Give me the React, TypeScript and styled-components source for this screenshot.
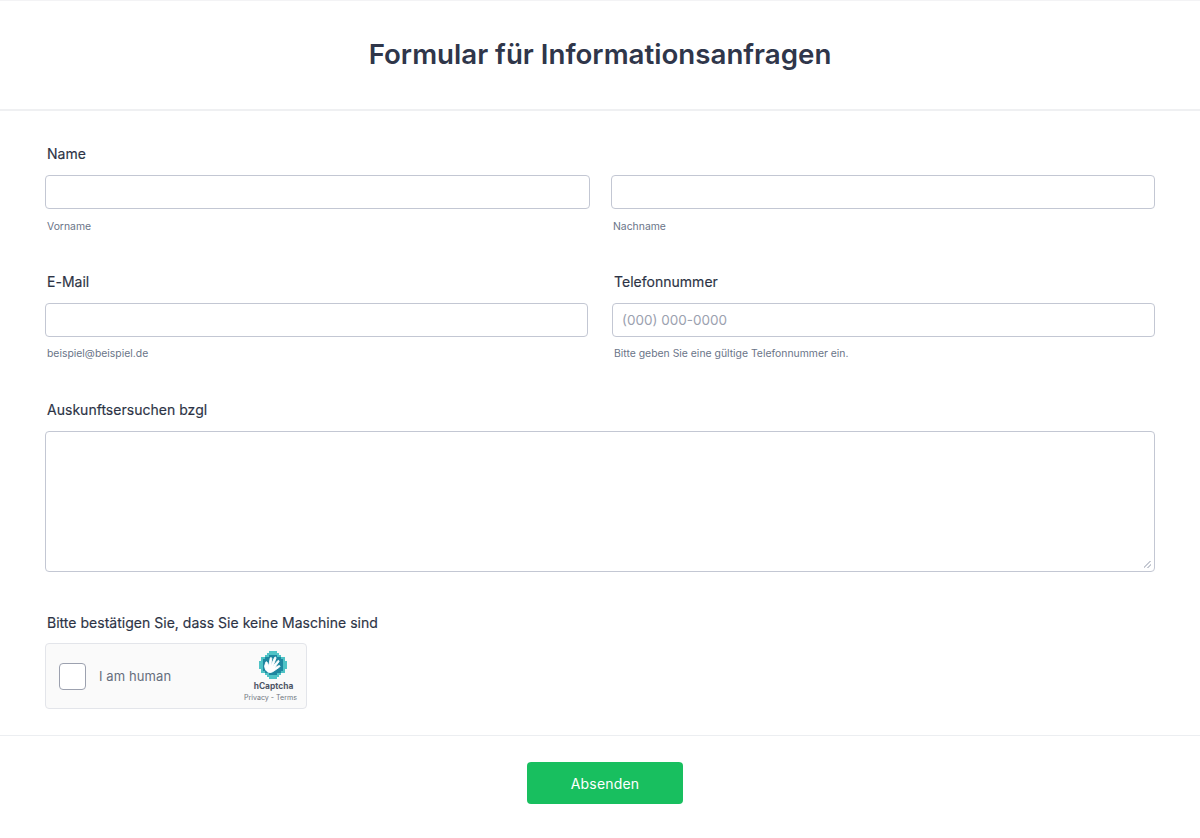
import styled, { createGlobalStyle } from 'styled-components';

const GlobalStyle = createGlobalStyle`
  html, body {
    margin: 0;
    padding: 0;
    background: #fff;
    font-family: Inter, "Liberation Sans", sans-serif;
    color: #2c3345;
  }
  * { box-sizing: border-box; }
`;

const Page = styled.div`
  width: 1200px;
  height: 838px;
  display: flex;
  flex-direction: column;
  overflow: hidden;
`;

const Header = styled.header`
  height: 111px;
  padding-top: 36px;
  border-top: 1px solid #f3f3f5;
  border-bottom: 2px solid #eff0f2;
  text-align: center;
`;

const Title = styled.h1`
  margin: 0;
  font-size: 27.7px;
  line-height: 35px;
  font-weight: 600;
  color: #2f364a;
`;

const Form = styled.form`
  height: 625px;
  padding: 33px 45px 0;
  display: flex;
  flex-direction: column;
  border-bottom: 1px solid #eceef1;
`;

const Row = styled.div<{ $columns: string; $gap: number }>`
  display: grid;
  grid-template-columns: ${({ $columns }) => $columns};
  column-gap: ${({ $gap }) => $gap}px;
  height: 128px;
`;

const Label = styled.label`
  display: block;
  height: 20px;
  padding-left: 2px;
  font-size: 14px;
  line-height: 20px;
  font-weight: 400;
  letter-spacing: 0.02px;
  color: #2c3345;
  -webkit-text-stroke: 0.15px #2c3345;
`;

const LabelSpacer = styled.div`
  height: 20px;
`;

const Input = styled.input`
  display: block;
  width: 100%;
  height: 34px;
  margin-top: 11px;
  padding: 0 9px;
  background: #fff;
  border: 1px solid #c3c7d3;
  border-radius: 4px;
  font-family: inherit;
  font-size: 13.5px;
  color: #2c3345;
  outline: none;
  &::placeholder {
    color: #9ba1af;
    opacity: 1;
  }
`;

const Hint = styled.div<{ $drop?: number }>`
  margin-top: ${({ $drop }) => 10 + ($drop ?? 0)}px;
  padding-left: 2px;
  font-size: 10.4px;
  line-height: 14px;
  color: #6a7488;
`;

const MessageField = styled.div`
  height: 212px;
`;

const Message = styled.textarea`
  display: block;
  width: 100%;
  height: 141px;
  margin-top: 11px;
  background: #fff;
  border: 1px solid #c3c7d3;
  border-radius: 4px;
  outline: none;
  resize: vertical;
  &::-webkit-resizer {
    background: linear-gradient(
        135deg,
        transparent 0 42%,
        #c6cad3 42% 54%,
        transparent 54% 68%,
        #c6cad3 68% 80%,
        transparent 80%
      )
      right 3px bottom 3px / 7px 7px no-repeat;
  }
`;

const CaptchaField = styled.div`
  padding-top: 1px;
`;

const Captcha = styled.div`
  width: 262px;
  height: 66px;
  margin-top: 10px;
  padding: 0 9px 0 13px;
  display: flex;
  align-items: center;
  background: #fafafa;
  border: 1px solid #e3e5ea;
  border-radius: 4px;
`;

const CaptchaBox = styled.div`
  width: 27px;
  height: 27px;
  background: #fff;
  border: 1px solid #9ca1af;
  border-radius: 4px;
`;

const CaptchaText = styled.span`
  margin-left: 13px;
  flex: 1;
  font-size: 13px;
  letter-spacing: 0.1px;
  color: #666e7d;
`;

const CaptchaBrand = styled.div`
  display: flex;
  flex-direction: column;
  align-items: center;
  padding-top: 1px;
`;

const LogoSlot = styled.div`
  height: 29px;
  margin-left: 5px;
`;

const BrandName = styled.div`
  margin-left: 6px;
  font-size: 8.4px;
  line-height: 12px;
  font-weight: 700;
  color: #4e5666;
`;

const BrandLinks = styled.div`
  margin-top: 1px;
  font-size: 7.1px;
  line-height: 10px;
  color: #70767f;
  white-space: nowrap;
`;

const Footer = styled.footer`
  display: flex;
  justify-content: center;
  padding-top: 26px;
  padding-left: 10px;
`;

const Submit = styled.button`
  width: 156px;
  height: 42px;
  border: none;
  border-radius: 4px;
  background: #18bf5f;
  color: #fff;
  font-family: inherit;
  font-size: 14px;
  font-weight: 400;
  letter-spacing: 0.2px;
`;

const diamond = [
  [10, 0, 8], [8, 2, 12], [6, 4, 16], [2, 6, 24], [2, 8, 24], [0, 10, 28],
  [0, 12, 28], [0, 14, 28], [0, 16, 28], [2, 18, 24], [2, 20, 24], [6, 22, 16], [8, 24, 12], [10, 26, 8],
];

const center = [
  [10, 4, 8], [6, 6, 16], [4, 8, 20], [4, 10, 20], [4, 12, 20], [4, 14, 20], [4, 16, 20], [4, 18, 20], [6, 20, 16], [10, 22, 8],
];

function HCaptchaLogo() {
  return (
    <svg width="28" height="28" viewBox="0 0 28 28" aria-hidden="true">
      {diamond.map(([x, y, w]) => (
        <rect key={y} x={x} y={y} width={w} height="2" fill="#4fc3c6" />
      ))}
      {center.map(([x, y, w]) => (
        <rect key={y} x={x} y={y} width={w} height="2" fill="#1f87a0" />
      ))}
      <path
        transform="rotate(28 14 14) translate(1.500 1.500) scale(0.9)"
        d="M5.500 15.600c-.8-.9.300-2.100 1.300-1.300l2.700 2.200.4-.5-2.300-7.200c-.4-1.100 1.200-1.700 1.700-.6l2.300 5.900.5-.1-.6-8.200c-.1-1.200 1.600-1.300 1.800-.1l1 8.100.5.100 1.500-6.700c.3-1.100 1.900-.8 1.700.4l-1.100 7.400.4.200 2.600-3.700c.7-1 2.100-.1 1.500 1l-3.900 7.600c-1.400 2.600-3.700 3.900-6.300 3.200-2.200-.6-3.700-2.200-5-3.900z"
        fill="#fff"
        stroke="#fff"
        strokeWidth="0.9"
        strokeLinejoin="round"
      />
    </svg>
  );
}

export default function App() {
  return (
    <Page>
      <GlobalStyle />
      <Header>
        <Title>Formular für Informationsanfragen</Title>
      </Header>
      <Form onSubmit={(e) => e.preventDefault()}>
        <Row $columns="545px 544px" $gap={21}>
          <div>
            <Label>Name</Label>
            <Input />
            <Hint $drop={1}>Vorname</Hint>
          </div>
          <div>
            <LabelSpacer />
            <Input />
            <Hint $drop={1}>Nachname</Hint>
          </div>
        </Row>
        <Row $columns="543px 543px" $gap={24}>
          <div>
            <Label>E-Mail</Label>
            <Input />
            <Hint>beispiel@beispiel.de</Hint>
          </div>
          <div>
            <Label>Telefonnummer</Label>
            <Input placeholder="(000) 000-0000" />
            <Hint>Bitte geben Sie eine gültige Telefonnummer ein.</Hint>
          </div>
        </Row>
        <MessageField>
          <Label>Auskunftsersuchen bzgl</Label>
          <Message />
        </MessageField>
        <CaptchaField>
          <Label>Bitte bestätigen Sie, dass Sie keine Maschine sind</Label>
          <Captcha>
            <CaptchaBox />
            <CaptchaText>I am human</CaptchaText>
            <CaptchaBrand>
              <LogoSlot>
                <HCaptchaLogo />
              </LogoSlot>
              <BrandName>hCaptcha</BrandName>
              <BrandLinks>Privacy - Terms</BrandLinks>
            </CaptchaBrand>
          </Captcha>
        </CaptchaField>
      </Form>
      <Footer>
        <Submit type="submit">Absenden</Submit>
      </Footer>
    </Page>
  );
}
